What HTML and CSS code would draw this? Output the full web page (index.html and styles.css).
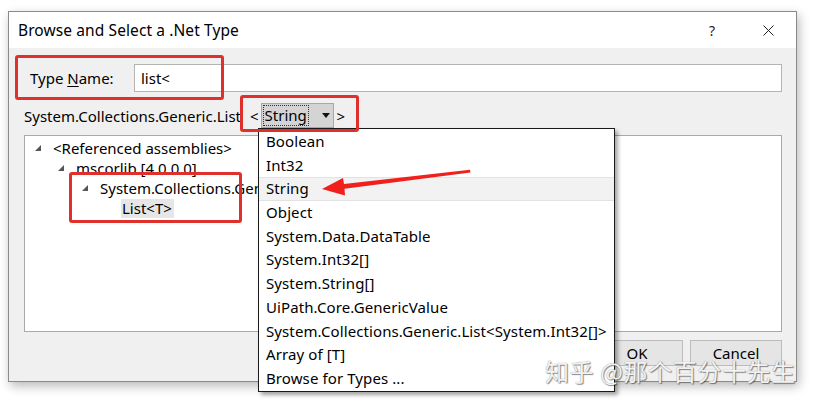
FILE: index.html
```html
<!DOCTYPE html>
<html>
<head>
<meta charset="utf-8">
<link rel="stylesheet" href="styles.css">
</head>
<body>
<div class="stage">
  <div class="dialog">
    <div class="titlebar">
      <span class="title">Browse and Select a .Net Type</span>
      <span class="help">?</span>
      <svg class="close" width="11" height="11" viewBox="0 0 11 11"><path d="M0.5 0.5 L10.5 10.5 M10.5 0.5 L0.5 10.5" stroke="#222" stroke-width="1"/></svg>
    </div>
    <div class="content">
      <div class="row-name">
        <span class="label">Type <u>N</u>ame:</span>
        <div class="input">list&lt;</div>
      </div>
      <div class="row-generic">
        <span class="gen-text">System.Collections.Generic.List</span>
        <span class="lt">&lt;</span>
        <div class="combo"><span class="focus">String</span><span class="caret"></span></div>
        <span class="gt">&gt;</span>
      </div>
      <div class="tree">
        <div class="node l1"><span class="tri"></span><span>&lt;Referenced assemblies&gt;</span></div>
        <div class="node l2"><span class="tri"></span><span>mscorlib [4.0.0.0]</span></div>
        <div class="node l3"><span class="tri"></span><span>System.Collections.Generic</span></div>
        <div class="node l4"><span class="sel">List&lt;T&gt;</span></div>
      </div>
      <div class="buttons">
        <div class="btn">OK</div>
        <div class="btn">Cancel</div>
      </div>
    </div>
  </div>

  <div class="dropdown">
    <div class="item">Boolean</div>
    <div class="item">Int32</div>
    <div class="item hover">String</div>
    <div class="item">Object</div>
    <div class="item">System.Data.DataTable</div>
    <div class="item">System.Int32[]</div>
    <div class="item">System.String[]</div>
    <div class="item">UiPath.Core.GenericValue</div>
    <div class="item">System.Collections.Generic.List&lt;System.Int32[]&gt;</div>
    <div class="item">Array of [T]</div>
    <div class="item">Browse for Types ...</div>
  </div>

  <svg class="red-arrow" width="815" height="406" viewBox="0 0 815 406">
    <polygon points="470,169.8 344,184 343,178 322,189 345,195.5 344.5,188.8 470.5,172.4" fill="#f0201c"/>
  </svg>

  <div class="mark mark-name"></div>
  <div class="mark mark-combo"></div>
  <div class="mark mark-tree"></div>

  <div class="watermark">知乎 @那个百分十先生</div>
</div>
</body>
</html>
```
FILE: styles.css
```css
* { box-sizing: border-box; }
html, body { margin: 0; padding: 0; background: #ffffff; }
body {
  font-family: "Noto Sans", "Open Sans", "Noto Sans CJK SC", sans-serif;
  font-size: 14px;
  color: #000;
  width: 815px;
  height: 406px;
  overflow: hidden;
}
.stage { position: relative; width: 815px; height: 406px; padding: 11px 0 0 8px; }

.dialog {
  width: 789px;
  height: 371px;
  border: 1px solid #8a8a8a;
  background: #f0f0f0;
  box-shadow: 2px 4px 10px rgba(0,0,0,0.28);
  display: flex;
  flex-direction: column;
}
.titlebar {
  height: 36px;
  background: #ffffff;
  display: flex;
  align-items: center;
  padding-left: 9px;
  flex: none;
}
.title { font-size: 15.5px; letter-spacing: 0.1px; flex: 1; }
.help { font-size: 14px; margin-right: 48px; color: #222; }
.close { margin-right: 22px; }

.content {
  flex: 1;
  padding: 16px 14px 0 15px;
  display: flex;
  flex-direction: column;
}
.row-name { display: flex; align-items: center; height: 28px; }
.label { width: 110px; padding-left: 6px; font-size: 15px; }
.label u { text-decoration: underline; text-underline-offset: 2px; }
.input {
  flex: 1;
  height: 28px;
  background: #fff;
  border: 1px solid #b4b4b4;
  padding-left: 6px;
  display: flex;
  align-items: center;
  font-size: 15px;
}

.row-generic {
  display: flex;
  align-items: center;
  height: 25px;
  margin-top: 11px;
  font-size: 15px;
}
.lt { margin-left: 9px; }
.combo {
  margin-left: 2px;
  width: 73px;
  height: 25px;
  background: #d4d4d4;
  border: 1px solid #a8a8a8;
  display: flex;
  align-items: center;
  padding-left: 1px;
}
.focus {
  outline: 1px dotted #333;
  outline-offset: -1px;
  padding: 0 2px 0 2px;
  line-height: 21px;
}
.caret {
  margin-left: 13px;
  width: 0; height: 0;
  border-left: 4px solid transparent;
  border-right: 4px solid transparent;
  border-top: 5px solid #111;
}
.gt { margin-left: 3px; }

.tree {
  margin-top: 7px;
  height: 197px;
  background: #fff;
  border: 1px solid #a9a9a9;
  padding-top: 2px;
  font-size: 15px;
}
.node { height: 20px; display: flex; align-items: center; white-space: nowrap; overflow: hidden; }
.l1 { padding-left: 10px; }
.l2 { padding-left: 33px; }
.l3 { padding-left: 57px; }
.l4 { padding-left: 96px; }
.tri {
  width: 18px;
  height: 20px;
  position: relative;
  flex: none;
}
.tri::before {
  content: "";
  position: absolute;
  left: 0;
  top: 7px;
  width: 0; height: 0;
  border-left: 6px solid transparent;
  border-bottom: 6px solid #555;
}
.sel { background: #e6e6e6; padding: 0 2px 0 1px; line-height: 19px; }

.buttons {
  margin-top: 8px;
  display: flex;
  justify-content: flex-end;
  gap: 7px;
}
.btn {
  width: 92px;
  height: 26px;
  background: #e5e5e5;
  border: 1px solid #bcbcbc;
  display: flex;
  align-items: center;
  justify-content: center;
  font-size: 15px;
}

.dropdown {
  position: absolute;
  left: 258px;
  top: 128px;
  width: 357px;
  height: 264px;
  background: #fff;
  border: 1px solid #1a1a1a;
  padding-top: 1px;
  box-shadow: 3px 3px 4px rgba(0,0,0,0.35);
  font-size: 15px;
}
.item { height: 23.7px; line-height: 23.7px; padding-left: 7px; white-space: nowrap; letter-spacing: 0.1px; }
.item.hover { background: #f2f2f2; box-shadow: inset 0 1px 0 #e2e2e2, inset 0 -1px 0 #e2e2e2; }

.red-arrow { position: absolute; left: 0; top: 0; }

.mark {
  position: absolute;
  border: 3px solid #e0302c;
  border-radius: 3px;
}
.mark-name { left: 15px; top: 55px; width: 209px; height: 45px; }
.mark-combo { left: 240px; top: 95px; width: 119px; height: 37px; }
.mark-tree { left: 69px; top: 172px; width: 173px; height: 51px; }

.watermark {
  position: absolute;
  left: 545px;
  top: 356px;
  font-family: "Noto Sans CJK SC", sans-serif;
  font-size: 24px;
  letter-spacing: 0.6px;
  line-height: 30px;
  color: rgba(255,255,255,0.92);
  text-shadow: 0 0 1px #777, 1px 1px 1px rgba(0,0,0,0.45);
  white-space: nowrap;
}
```
